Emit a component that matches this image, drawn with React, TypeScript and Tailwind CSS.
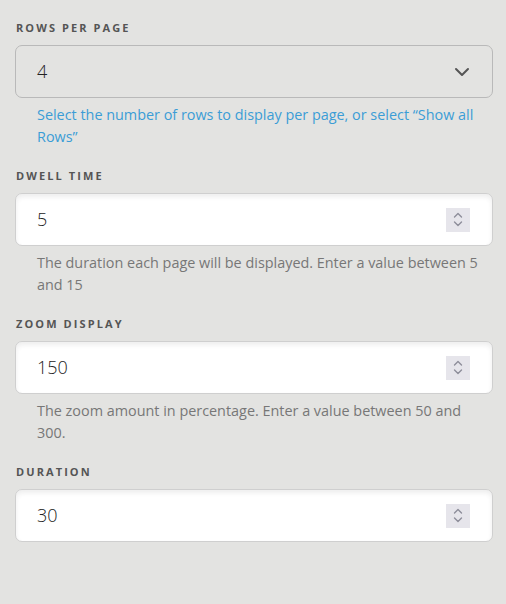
import React from "react";

const font = { fontFamily: '"Open Sans", "Noto Sans", sans-serif' };

function Label({ children }: { children: React.ReactNode }) {
  return (
    <div className="h-4 text-[11px] leading-4 font-bold tracking-[0.19em] text-[#555555] pl-px">
      {children}
    </div>
  );
}

function Help({ lines, blue }: { lines: string[]; blue?: boolean }) {
  return (
    <div
      className={`mt-[6px] pl-[22px] text-[14.4px] leading-[22px] ${
        blue ? "text-[#3b9dd6]" : "text-[#777777]"
      }`}
    >
      {lines.map((l, i) => (
        <div key={i} className="whitespace-nowrap">
          {l}
        </div>
      ))}
    </div>
  );
}

function Spinner() {
  return (
    <div className="w-6 h-6 bg-[#e6e5eb] flex flex-col items-center justify-center gap-[3px]">
      <svg width="10" height="6" viewBox="0 0 10 6" fill="none">
        <path d="M1.5 5L5 1.5L8.5 5" stroke="#8e8e9a" strokeWidth="1.4" strokeLinecap="round" strokeLinejoin="round" />
      </svg>
      <svg width="10" height="6" viewBox="0 0 10 6" fill="none">
        <path d="M1.5 1L5 4.5L8.5 1" stroke="#8e8e9a" strokeWidth="1.4" strokeLinecap="round" strokeLinejoin="round" />
      </svg>
    </div>
  );
}

function NumberField({ value }: { value: string }) {
  return (
    <div className="mt-[9px] h-[53px] rounded-[7px] border border-[#cfcfcf] bg-white shadow-[inset_0_3px_5px_rgba(0,0,0,0.07)] flex items-center pl-[21px] pr-[22px]">
      <span className="flex-1 text-[18px] font-light text-[#222222]">{value}</span>
      <Spinner />
    </div>
  );
}

export default function App() {
  return (
    <div className="min-h-[604px] w-full bg-[#e3e3e1] pl-[15px] pr-[13px] pt-5" style={font}>
      <Label>ROWS PER PAGE</Label>
      <div className="mt-[9px] h-[53px] rounded-[7px] border border-[#b9b9b9] flex items-center pl-[21px] pr-[22px]">
        <span className="flex-1 text-[18px] font-light text-[#222222]">4</span>
        <svg width="16" height="10" viewBox="0 0 16 10" fill="none">
          <path d="M2 2L8 8L14 2" stroke="#555555" strokeWidth="2" strokeLinecap="round" strokeLinejoin="round" />
        </svg>
      </div>
      <Help blue lines={["Select the number of rows to display per page, or select \u201cShow all", "Rows\u201d"]} />

      <div className="mt-5">
        <Label>DWELL TIME</Label>
        <NumberField value="5" />
        <Help lines={["The duration each page will be displayed. Enter a value between 5", "and 15"]} />
      </div>

      <div className="mt-5">
        <Label>ZOOM DISPLAY</Label>
        <NumberField value="150" />
        <Help lines={["The zoom amount in percentage. Enter a value between 50 and", "300."]} />
      </div>

      <div className="mt-5">
        <Label>DURATION</Label>
        <NumberField value="30" />
      </div>
    </div>
  );
}
